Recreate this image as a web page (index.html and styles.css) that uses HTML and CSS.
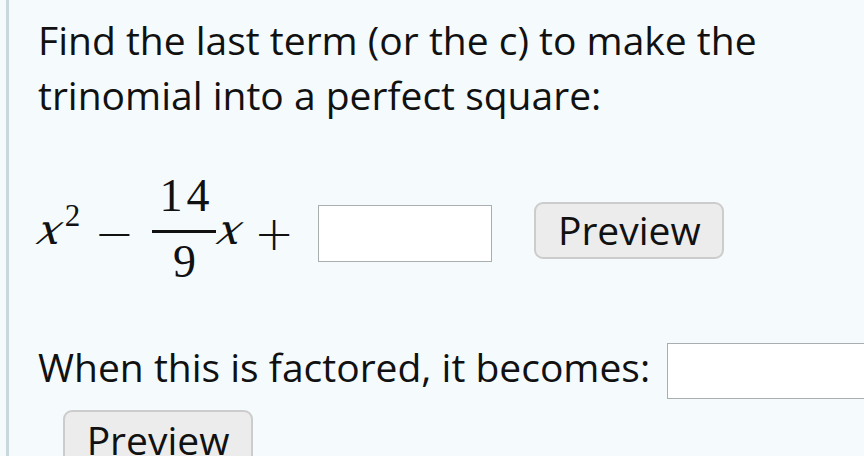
FILE: index.html
```html
<!DOCTYPE html>
<html>
<head>
<meta charset="utf-8">
<link rel="stylesheet" href="styles.css">
</head>
<body>
<div class="problem">
  <p class="prompt">Find the last term (or the c) to make the trinomial into a perfect square:</p>
  <div class="mathrow">
    <span class="math">
      <span class="mi">x</span><span class="sup">2</span><span class="mo minus">&minus;</span><span class="frac"><span class="num">14</span><span class="den">9</span></span><span class="mi">x</span><span class="mo plus">+</span>
    </span>
    <span class="answer small"></span>
    <span class="btn">Preview</span>
  </div>
  <div class="factrow">
    <span class="label">When this is factored, it becomes:</span>
    <span class="answer wide"></span>
  </div>
  <div class="btnrow"><span class="btn">Preview</span></div>
</div>
</body>
</html>
```

FILE: styles.css
```css
html, body {
  margin: 0;
  padding: 0;
  background: #f5fbfd;
  overflow: hidden;
}
body {
  width: 864px;
  height: 456px;
}
.problem {
  margin-left: 6px;
  border-left: 3px solid #c9d8dc;
  padding-left: 29px;
  height: 456px;
  font-family: "Open Sans", sans-serif;
  color: #111;
}
.prompt {
  margin: 0;
  padding-top: 12px;
  font-size: 39px;
  line-height: 55px;
  width: 800px;
}
.mathrow {
  display: flex;
  align-items: center;
  margin-top: 51px;
  height: 120px;
}
.math {
  display: flex;
  align-items: center;
  flex-shrink: 0;
  font-family: "Liberation Serif", "DejaVu Serif", serif;
  font-size: 46px;
  line-height: 44px;
  color: #111;
}
.mi {
  display: inline-block;
  font-family: "DejaVu Serif", "Liberation Serif", serif;
  font-style: italic;
  font-size: 42px;
  padding-bottom: 6px;
  transform: skewX(-14deg);
}
.sup {
  font-size: 31px;
  line-height: 30px;
  margin-top: -34px;
  margin-left: 3px;
}
.mo {
  display: inline-block;
  font-family: "DejaVu Sans", sans-serif;
  font-weight: 200;
  font-size: 48px;
}
.minus {
  margin-left: 14px;
  margin-right: 18px;
}
.plus {
  margin-left: 12px;
}
.frac {
  display: inline-flex;
  flex-direction: column;
  align-items: center;
  margin: 0 2px 0 0;
}
.num {
  border-bottom: 3px solid #111;
  padding: 0 3px 12px 3px;
  letter-spacing: 4px;
  text-indent: 4px;
}
.den {
  padding: 7px 0 8px 0;
}
.answer {
  display: inline-block;
  flex-shrink: 0;
  background: #fff;
  border: 1px solid #a9aeae;
  box-sizing: border-box;
  height: 57px;
}
.small {
  width: 174px;
  margin-left: 24px;
  margin-top: 1px;
}
.btn {
  display: inline-block;
  flex-shrink: 0;
  box-sizing: border-box;
  background: #ececec;
  border: 2px solid #cccccc;
  border-radius: 9px;
  font-size: 39px;
  line-height: 52px;
  color: #111;
  text-align: center;
  width: 190px;
}
.mathrow .btn {
  margin-left: 42px;
  margin-top: -6px;
  height: 57px;
}
.factrow {
  display: flex;
  align-items: flex-start;
  margin-top: 46px;
  font-size: 39px;
  line-height: 56px;
}
.label {
  white-space: nowrap;
  flex-shrink: 0;
}
.wide {
  width: 220px;
  margin-left: 17px;
  margin-top: 4px;
  height: 56px;
}
.btnrow {
  margin-top: 11px;
  padding-left: 25px;
}
.btnrow .btn {
  height: 60px;
  line-height: 56px;
}
```
